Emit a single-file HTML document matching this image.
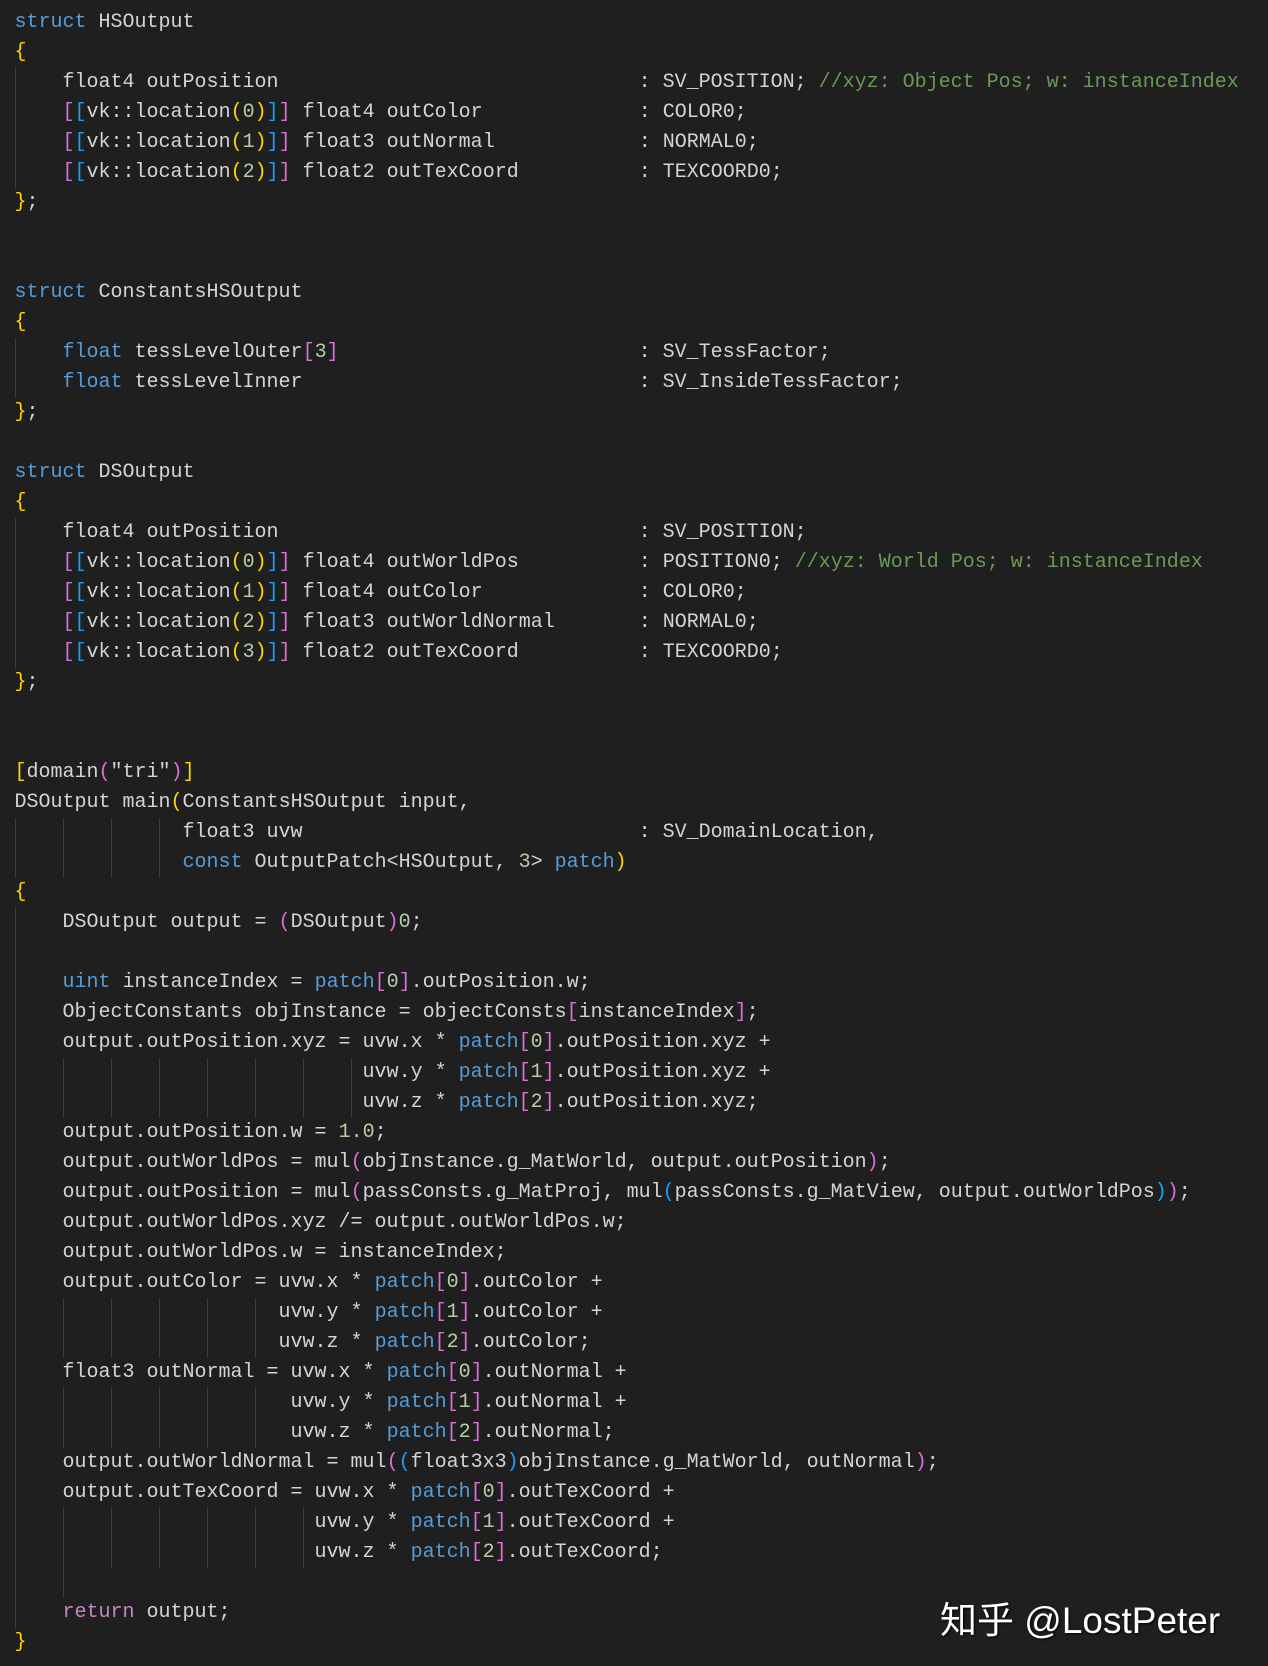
<!DOCTYPE html>
<html><head><meta charset="utf-8"><style>
html,body{margin:0;padding:0;background:#1f1f1f;}
body{width:1268px;height:1666px;position:relative;overflow:hidden;}
pre{position:absolute;left:14.5px;top:8px;margin:0;font-family:"Liberation Mono",monospace;font-size:20px;line-height:30px;color:#d4d4d4;}
.k{color:#569cd6}.c{color:#6a9955}.n{color:#b5cea8}.y{color:#ffd700}.p{color:#da70d6}.b{color:#179fff}.r{color:#c586c0}
.g{position:absolute;width:1px;background:#3e3e3e;}
.wm{position:absolute;left:940px;top:1590px;font-family:"Liberation Sans","Noto Sans CJK SC",sans-serif;font-size:37px;color:#fff;text-shadow:1px 1px 2px #000;white-space:nowrap;}
</style></head><body>
<div class="g" style="left:15px;top:68px;height:120px"></div>
<div class="g" style="left:15px;top:338px;height:60px"></div>
<div class="g" style="left:15px;top:518px;height:150px"></div>
<div class="g" style="left:15px;top:818px;height:60px"></div>
<div class="g" style="left:15px;top:908px;height:720px"></div>
<div class="g" style="left:63px;top:818px;height:60px"></div>
<div class="g" style="left:111px;top:818px;height:60px"></div>
<div class="g" style="left:159px;top:818px;height:60px"></div>
<div class="g" style="left:63px;top:1058px;height:60px"></div>
<div class="g" style="left:111px;top:1058px;height:60px"></div>
<div class="g" style="left:159px;top:1058px;height:60px"></div>
<div class="g" style="left:207px;top:1058px;height:60px"></div>
<div class="g" style="left:255px;top:1058px;height:60px"></div>
<div class="g" style="left:303px;top:1058px;height:60px"></div>
<div class="g" style="left:351px;top:1058px;height:60px"></div>
<div class="g" style="left:63px;top:1298px;height:60px"></div>
<div class="g" style="left:111px;top:1298px;height:60px"></div>
<div class="g" style="left:159px;top:1298px;height:60px"></div>
<div class="g" style="left:207px;top:1298px;height:60px"></div>
<div class="g" style="left:255px;top:1298px;height:60px"></div>
<div class="g" style="left:63px;top:1388px;height:60px"></div>
<div class="g" style="left:111px;top:1388px;height:60px"></div>
<div class="g" style="left:159px;top:1388px;height:60px"></div>
<div class="g" style="left:207px;top:1388px;height:60px"></div>
<div class="g" style="left:255px;top:1388px;height:60px"></div>
<div class="g" style="left:63px;top:1508px;height:90px"></div>
<div class="g" style="left:111px;top:1508px;height:60px"></div>
<div class="g" style="left:159px;top:1508px;height:60px"></div>
<div class="g" style="left:207px;top:1508px;height:60px"></div>
<div class="g" style="left:255px;top:1508px;height:60px"></div>
<div class="g" style="left:303px;top:1508px;height:60px"></div>
<pre><span class="k">struct</span> HSOutput
<span class="y">{</span>
    float4 outPosition                              : SV_POSITION; <span class="c">//xyz: Object Pos; w: instanceIndex</span>
    <span class="p">[</span><span class="b">[</span>vk::location<span class="y">(</span><span class="n">0</span><span class="y">)</span><span class="b">]</span><span class="p">]</span> float4 outColor             : COLOR0;
    <span class="p">[</span><span class="b">[</span>vk::location<span class="y">(</span><span class="n">1</span><span class="y">)</span><span class="b">]</span><span class="p">]</span> float3 outNormal            : NORMAL0;
    <span class="p">[</span><span class="b">[</span>vk::location<span class="y">(</span><span class="n">2</span><span class="y">)</span><span class="b">]</span><span class="p">]</span> float2 outTexCoord          : TEXCOORD0;
<span class="y">}</span>;


<span class="k">struct</span> ConstantsHSOutput
<span class="y">{</span>
    <span class="k">float</span> tessLevelOuter<span class="p">[</span><span class="n">3</span><span class="p">]</span>                         : SV_TessFactor;
    <span class="k">float</span> tessLevelInner                            : SV_InsideTessFactor;
<span class="y">}</span>;

<span class="k">struct</span> DSOutput
<span class="y">{</span>
    float4 outPosition                              : SV_POSITION;
    <span class="p">[</span><span class="b">[</span>vk::location<span class="y">(</span><span class="n">0</span><span class="y">)</span><span class="b">]</span><span class="p">]</span> float4 outWorldPos          : POSITION0; <span class="c">//xyz: World Pos; w: instanceIndex</span>
    <span class="p">[</span><span class="b">[</span>vk::location<span class="y">(</span><span class="n">1</span><span class="y">)</span><span class="b">]</span><span class="p">]</span> float4 outColor             : COLOR0;
    <span class="p">[</span><span class="b">[</span>vk::location<span class="y">(</span><span class="n">2</span><span class="y">)</span><span class="b">]</span><span class="p">]</span> float3 outWorldNormal       : NORMAL0;
    <span class="p">[</span><span class="b">[</span>vk::location<span class="y">(</span><span class="n">3</span><span class="y">)</span><span class="b">]</span><span class="p">]</span> float2 outTexCoord          : TEXCOORD0;
<span class="y">}</span>;


<span class="y">[</span>domain<span class="p">(</span>"tri"<span class="p">)</span><span class="y">]</span>
DSOutput main<span class="y">(</span>ConstantsHSOutput input,
              float3 uvw                            : SV_DomainLocation,
              <span class="k">const</span> OutputPatch&lt;HSOutput, <span class="n">3</span>&gt; <span class="k">patch</span><span class="y">)</span>
<span class="y">{</span>
    DSOutput output = <span class="p">(</span>DSOutput<span class="p">)</span><span class="n">0</span>;

    <span class="k">uint</span> instanceIndex = <span class="k">patch</span><span class="p">[</span><span class="n">0</span><span class="p">]</span>.outPosition.w;
    ObjectConstants objInstance = objectConsts<span class="p">[</span>instanceIndex<span class="p">]</span>;
    output.outPosition.xyz = uvw.x * <span class="k">patch</span><span class="p">[</span><span class="n">0</span><span class="p">]</span>.outPosition.xyz +
                             uvw.y * <span class="k">patch</span><span class="p">[</span><span class="n">1</span><span class="p">]</span>.outPosition.xyz +
                             uvw.z * <span class="k">patch</span><span class="p">[</span><span class="n">2</span><span class="p">]</span>.outPosition.xyz;
    output.outPosition.w = <span class="n">1.0</span>;
    output.outWorldPos = mul<span class="p">(</span>objInstance.g_MatWorld, output.outPosition<span class="p">)</span>;
    output.outPosition = mul<span class="p">(</span>passConsts.g_MatProj, mul<span class="b">(</span>passConsts.g_MatView, output.outWorldPos<span class="b">)</span><span class="p">)</span>;
    output.outWorldPos.xyz /= output.outWorldPos.w;
    output.outWorldPos.w = instanceIndex;
    output.outColor = uvw.x * <span class="k">patch</span><span class="p">[</span><span class="n">0</span><span class="p">]</span>.outColor +
                      uvw.y * <span class="k">patch</span><span class="p">[</span><span class="n">1</span><span class="p">]</span>.outColor +
                      uvw.z * <span class="k">patch</span><span class="p">[</span><span class="n">2</span><span class="p">]</span>.outColor;
    float3 outNormal = uvw.x * <span class="k">patch</span><span class="p">[</span><span class="n">0</span><span class="p">]</span>.outNormal +
                       uvw.y * <span class="k">patch</span><span class="p">[</span><span class="n">1</span><span class="p">]</span>.outNormal +
                       uvw.z * <span class="k">patch</span><span class="p">[</span><span class="n">2</span><span class="p">]</span>.outNormal;
    output.outWorldNormal = mul<span class="p">(</span><span class="b">(</span>float3x3<span class="b">)</span>objInstance.g_MatWorld, outNormal<span class="p">)</span>;
    output.outTexCoord = uvw.x * <span class="k">patch</span><span class="p">[</span><span class="n">0</span><span class="p">]</span>.outTexCoord +
                         uvw.y * <span class="k">patch</span><span class="p">[</span><span class="n">1</span><span class="p">]</span>.outTexCoord +
                         uvw.z * <span class="k">patch</span><span class="p">[</span><span class="n">2</span><span class="p">]</span>.outTexCoord;

    <span class="r">return</span> output;
<span class="y">}</span></pre>
<div class="wm">知乎 @LostPeter</div>
</body></html>
